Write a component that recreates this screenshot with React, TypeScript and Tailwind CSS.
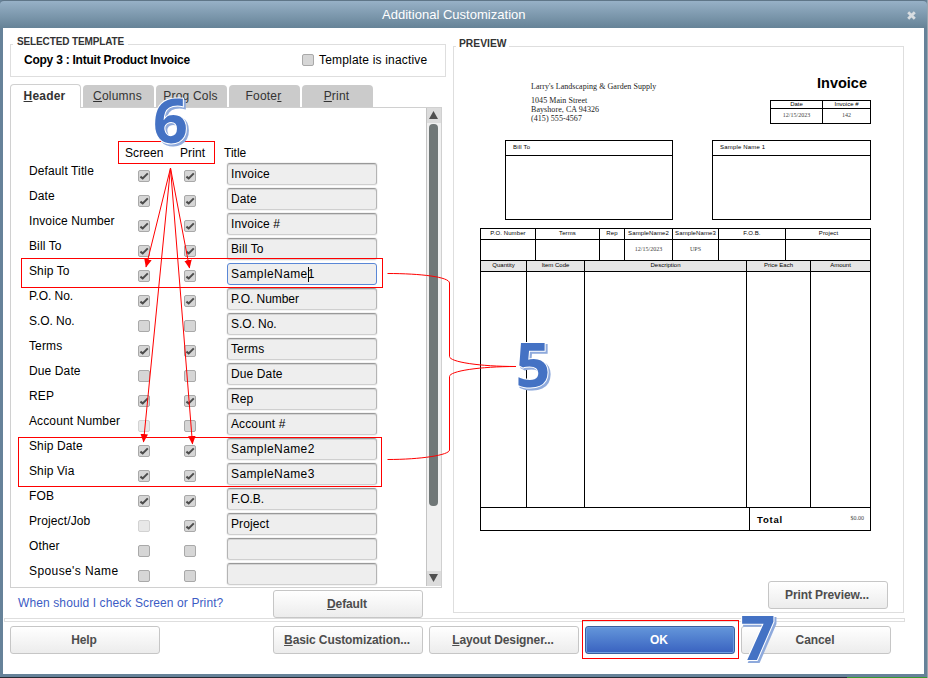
import type { ReactNode } from 'react'
import clsx from 'clsx'

type CheckState = 'on' | 'off' | 'disabled'

// ── Header tab fields ────────────────────────────────────────────────────────
const FIELDS: { label: string; screen: CheckState; print: CheckState; title: string; focused?: boolean }[] = [
  { label: 'Default Title', screen: 'on', print: 'on', title: 'Invoice' },
  { label: 'Date', screen: 'on', print: 'on', title: 'Date' },
  { label: 'Invoice Number', screen: 'on', print: 'on', title: 'Invoice #' },
  { label: 'Bill To', screen: 'on', print: 'on', title: 'Bill To' },
  { label: 'Ship To', screen: 'on', print: 'on', title: 'SampleName1', focused: true },
  { label: 'P.O. No.', screen: 'on', print: 'on', title: 'P.O. Number' },
  { label: 'S.O. No.', screen: 'off', print: 'off', title: 'S.O. No.' },
  { label: 'Terms', screen: 'on', print: 'on', title: 'Terms' },
  { label: 'Due Date', screen: 'off', print: 'off', title: 'Due Date' },
  { label: 'REP', screen: 'on', print: 'on', title: 'Rep' },
  { label: 'Account Number', screen: 'disabled', print: 'off', title: 'Account #' },
  { label: 'Ship Date', screen: 'on', print: 'on', title: 'SampleName2' },
  { label: 'Ship Via', screen: 'on', print: 'on', title: 'SampleName3' },
  { label: 'FOB', screen: 'on', print: 'on', title: 'F.O.B.' },
  { label: 'Project/Job', screen: 'disabled', print: 'on', title: 'Project' },
  { label: 'Other', screen: 'off', print: 'off', title: '' },
  { label: "Spouse's Name", screen: 'off', print: 'off', title: '' },
]

const INFO_COLS = [
  { head: 'P.O. Number', value: '' },
  { head: 'Terms', value: '' },
  { head: 'Rep', value: '' },
  { head: 'SampleName2', value: '12/15/2023' },
  { head: 'SampleName3', value: 'UPS' },
  { head: 'F.O.B.', value: '' },
  { head: 'Project', value: '' },
]

const ITEM_COLS = ['Quantity', 'Item Code', 'Description', 'Price Each', 'Amount']

// Names run a little wide, dotted abbreviations a little tight
function tracking(text: string) {
  if (/Name/.test(text)) return 'tracking-[0.4px]'
  if (/^\w\.O\./.test(text)) return 'tracking-[-0.05px]'
  return 'tracking-[0.12px]'
}

function Checkbox({ state }: { state: CheckState }) {
  return (
    <span
      className={clsx(
        'block size-3 shrink-0 rounded-[2px] border',
        state === 'disabled' ? 'border-[#d2d2d2] bg-[#e8e8e8]' : 'border-[#a9a9a9] bg-[#d6d6d6]',
      )}
    >
      {state === 'on' && (
        <svg viewBox="0 0 10 10" className="block size-[10px]">
          <path d="M1.4 5.6 L3.7 7.4 L8.8 2.4" fill="none" stroke="#4c4c4c" strokeWidth="2" />
        </svg>
      )}
    </span>
  )
}

function Button({ className, primary, children }: { className?: string; primary?: boolean; children: ReactNode }) {
  return (
    <button
      className={clsx(
        'h-7 shrink-0 rounded-[3px] border pr-0.5 text-center text-[12px] leading-[26px] font-bold tracking-[-0.1px]',
        primary
          ? 'border-[#3a5f9c] bg-linear-to-b from-[#6496da] to-[#3a62c0] text-white shadow-[inset_0_0_0_1px_#6f9de0]'
          : 'border-[#c6c6c6] bg-linear-to-b from-white to-[#ececec] text-[#4d4d4d]',
        className,
      )}
    >
      {children}
    </button>
  )
}

function Tab({ active, children }: { active?: boolean; children: ReactNode }) {
  return (
    <div
      className={clsx(
        'text-center text-[12px] tracking-[0.2px] text-[#333]',
        active
          ? 'z-10 h-6 w-[71px] rounded-t-[4px] border border-b-0 border-[#d0d0d0] bg-white pr-0.5 leading-[23px] font-bold'
          : 'mt-px h-[22px] w-[71px] rounded-t-[4px] bg-[#cbcbcb] pr-0.5 leading-[22px]',
      )}
    >
      {children}
    </div>
  )
}

function TemplateBox() {
  return (
    <div className="mt-4 h-[33px] w-[436px] border border-[#dedede]">
      <p className="-mt-[9px] ml-[2px] w-[115px] bg-white pl-1 text-[10px] leading-[11px] font-bold tracking-[-0.13px] whitespace-nowrap text-[#333]">
        SELECTED TEMPLATE
      </p>
      <div className="flex items-center pt-[5px] pl-[13px] leading-4">
        <span className="w-[278px] font-bold tracking-[-0.24px]">Copy 3 : Intuit Product Invoice</span>
        <Checkbox state="off" />
        <span className="ml-[5px] tracking-[0.18px]">Template is inactive</span>
      </div>
    </div>
  )
}

function Scrollbar() {
  return (
    <div className="flex h-[478px] w-[15px] flex-col border-l border-[#c4c4c4] bg-[#f0f0f0]">
      <div className="h-[15px] bg-[#dcdcdc] pt-[3px] pl-[2px]">
        <svg viewBox="0 0 9 8" className="h-2 w-[9px]">
          <path d="M4.5 0 L9 8 H0 Z" fill="#4f4f4f" />
        </svg>
      </div>
      <div className="mt-px ml-[2px] h-[382px] w-[9px] rounded-[4px] bg-[#707777]" />
      <div className="mt-auto h-[15px] bg-[#dcdcdc] pt-[3px] pl-[2px]">
        <svg viewBox="0 0 9 8" className="h-2 w-[9px]">
          <path d="M4.5 8 L9 0 H0 Z" fill="#4f4f4f" />
        </svg>
      </div>
    </div>
  )
}

function FieldsPanel() {
  return (
    <div className="-mt-px flex h-[481px] w-[432px] overflow-hidden border border-[#d0d0d0]">
      <div className="w-[415px]">
        <div className="flex h-[55px] pt-[37px] leading-4">
          <span className="ml-[114px] w-[55px] tracking-[0.1px]">Screen</span>
          <span className="w-[44px] tracking-[0.1px]">Print</span>
          <span>Title</span>
        </div>
        {FIELDS.map((f) => (
          <div key={f.label} className="flex h-[25px] items-start">
            <span className={clsx('ml-[18px] w-[109px] leading-4 whitespace-nowrap', tracking(f.label))}>{f.label}</span>
            <span className="mt-[7px] mr-[34px]">
              <Checkbox state={f.screen} />
            </span>
            <span className="mt-[7px] mr-[31px]">
              <Checkbox state={f.print} />
            </span>
            <div
              className={clsx(
                'h-[22px] w-[150px] rounded-[3px] border bg-[#eee] pl-[3px] leading-5',
                tracking(f.title),
                f.focused
                  ? 'border-[#5a87d6]'
                  : 'border-x-[#b4b4b4] border-t-[#999] border-b-[#cfcfcf] shadow-[inset_0_1px_0_#d4d4d4,0_0_0_1px_#f4f4f4]',
              )}
            >
              {f.focused ? (
                <>
                  {f.title.slice(0, -1)}
                  <span className="-mr-px inline-block h-[15px] w-px bg-black align-middle" />
                  {f.title.slice(-1)}
                </>
              ) : (
                f.title
              )}
            </div>
          </div>
        ))}
      </div>
      <Scrollbar />
    </div>
  )
}

function AddressBox({ title, className }: { title: string; className: string }) {
  return (
    <div className={clsx('h-20 border border-black', className)}>
      <div className="h-[15px] border-b border-black pl-[7px] text-[6px] leading-[13px] tracking-[0.18px]">{title}</div>
    </div>
  )
}

function InvoicePaper() {
  return (
    <div className="ml-[26px] w-[391px] text-black">
      {/* Company + invoice number */}
      <div className="flex h-[93px] justify-between pt-[27px]">
        <div className="ml-[51px] pt-[8px] font-['Liberation_Serif'] text-[8px] leading-[9px] whitespace-nowrap text-[#222]">
          <p className="mb-[5px] tracking-[0.05px]">Larry's Landscaping &amp; Garden Supply</p>
          <p className="tracking-[0.05px]">1045 Main Street</p>
          <p className="tracking-[0.07px]">Bayshore, CA 94326</p>
          <p className="tracking-[0.07px]">(415) 555-4567</p>
        </div>
        <div className="w-[101px]">
          <p className="pr-1 text-right text-[14.5px] leading-[18px] font-bold">Invoice</p>
          <div className="mt-2 grid h-6 grid-cols-[52px_47px] grid-rows-[8px_14px] border border-black text-center text-[6px]">
            <div className="border-r border-b border-black leading-[7px]">Date</div>
            <div className="border-b border-black leading-[7px]">Invoice #</div>
            <div className="border-r border-black font-['Liberation_Serif'] leading-[13px] text-[#444]">12/15/2023</div>
            <div className="font-['Liberation_Serif'] leading-[13px] text-[#444]">142</div>
          </div>
        </div>
      </div>

      {/* Addresses */}
      <div className="flex justify-between pl-[25px]">
        <AddressBox title="Bill To" className="w-[168px]" />
        <AddressBox title="Sample Name 1" className="w-[159px]" />
      </div>

      {/* Order info */}
      <div className="mt-2 grid h-8 grid-cols-[55px_64px_25px_48px_46px_67px_85px] border border-b-0 border-black text-center text-[6px]">
        {INFO_COLS.map((c, i) => (
          <div key={c.head} className={clsx('overflow-hidden whitespace-nowrap', i < 6 && 'border-r border-black')}>
            <div className="h-[11px] border-b border-black leading-[9px] tracking-[0.1px]">{c.head}</div>
            <div className="pt-[3px] font-['Liberation_Serif'] leading-[13px] text-[#444]">{c.value}</div>
          </div>
        ))}
      </div>

      {/* Line items */}
      <div className="grid h-[247px] grid-cols-[46px_58px_162px_64px_59px] border border-b-0 border-black text-center text-[6px]">
        {ITEM_COLS.map((c, i) => (
          <div key={c} className={clsx(i < 4 && 'border-r border-black')}>
            <div className="h-[11px] border-b border-black bg-[#e6e6e6] leading-[9px]">{c}</div>
          </div>
        ))}
      </div>
      <div className="flex h-6 border border-black">
        <div className="w-[269px] border-r border-black" />
        <span className="ml-[7px] text-[9.5px] leading-[23px] font-bold tracking-[0.8px]">Total</span>
        <span className="mr-[6px] ml-auto font-['Liberation_Serif'] text-[6px] leading-5 text-[#444]">$0.00</span>
      </div>
    </div>
  )
}

function StepNumber({ n, x, y }: { n: string; x: number; y: number }) {
  return (
    <text
      x={x}
      y={y}
      className="font-['Open_Sans',sans-serif] text-[61px] font-bold [filter:drop-shadow(2px_2px_0_#8faadc)]"
      fill="#4472c4"
      stroke="#fff"
      strokeWidth="2"
      paintOrder="stroke"
    >
      {n}
    </text>
  )
}

// Red callouts and step numbers drawn over the dialog
function Annotations() {
  return (
    <svg className="pointer-events-none absolute inset-0 z-20" width="928" height="678" viewBox="0 0 928 678">
      <defs>
        <marker id="head" markerWidth="9" markerHeight="8" refX="8" refY="4" orient="auto" markerUnits="userSpaceOnUse">
          <path d="M0 0.2 L8.5 4 L0 7.8 Z" fill="#f00" />
        </marker>
      </defs>
      <g fill="none" stroke="#f00" strokeWidth="1">
        <rect x="118.5" y="141.5" width="96" height="22" />
        <rect x="21.5" y="258.5" width="361" height="29" />
        <rect x="18.5" y="437.5" width="363" height="49" />
        <rect x="582.5" y="620.5" width="156" height="38" />
        <path d="M170.5 168 L146 267" markerEnd="url(#head)" />
        <path d="M170.5 168 L189.5 268" markerEnd="url(#head)" />
        <path d="M170.5 168 L143.5 442" markerEnd="url(#head)" />
        <path d="M170.5 168 L192.5 444" markerEnd="url(#head)" />
        <path d="M387.5 273.5 C421 273.5 449.5 277 449.5 283 V356.5 C449.5 362 480 366.5 516 366.5 C480 366.5 449.5 371 449.5 376.5 V450 C449.5 455 421 459.5 387.5 459.5" />
      </g>
      <StepNumber n="6" x={153} y={143} />
      <StepNumber n="5" x={515.5} y={387} />
      <StepNumber n="7" x={740.5} y={660} />
    </svg>
  )
}

export default function App() {
  return (
    <div className="relative flex h-[678px] w-[928px] flex-col overflow-hidden border-r border-[#9aa6af] bg-[#668299] font-['Liberation_Sans',Arial,sans-serif] text-[12px] text-black">
      {/* Title bar */}
      <header className="flex h-7 shrink-0 items-center rounded-t-[4px] border-t border-[#5f7688] bg-linear-to-b from-[#97b1c7] to-[#668397] text-white">
        <h1 className="ml-[382px] pt-px text-[13px] leading-4 tracking-[0.02px]">Additional Customization</h1>
        <svg viewBox="0 0 9 9" className="mt-px mr-[11px] ml-auto size-[9px]">
          <path d="M1.2 1.2 L7.8 7.8 M7.8 1.2 L1.2 7.8" stroke="#d8dde1" strokeWidth="2.8" />
        </svg>
      </header>

      <div className="mr-[3px] ml-[3px] flex h-[646px] shrink-0 flex-col bg-white">
        <main className="flex h-[590px] pl-[7px]">
          <section className="w-[443px]">
            <TemplateBox />
            <div className="mt-[7px] flex gap-[2px]">
              <Tab active>
                <u>H</u>eader
              </Tab>
              <Tab>
                <u>C</u>olumns
              </Tab>
              <Tab>Prog Cols</Tab>
              <Tab>
                Foote<u>r</u>
              </Tab>
              <Tab>
                <u>P</u>rint
              </Tab>
            </div>
            <FieldsPanel />
            <div className="flex pt-[2px] pl-2">
              <a className="w-[255px] leading-[26px] tracking-[0.11px] text-[#3c5cc4]">When should I check Screen or Print?</a>
              <Button className="w-[150px]">
                <u>D</u>efault
              </Button>
            </div>
          </section>

          <section className="mt-[18px] flex h-[567px] w-[451px] flex-col border border-[#dedede]">
            <p className="-mt-[9px] ml-[2px] w-[53px] bg-white pl-[3px] text-[10.3px] leading-[11px] font-bold text-[#333]">PREVIEW</p>
            <div className="-mt-[2px]">
              <InvoicePaper />
            </div>
            <Button className="mt-auto mr-[15px] mb-[3px] w-[120px] self-end">Print Preview...</Button>
          </section>
        </main>

        <div className="ml-px h-1 w-[901px] shrink-0 border border-[#dedede]" />

        {/* Dialog buttons */}
        <footer className="mt-1 flex gap-[6px] pl-[7px]">
          <Button className="mr-[107px] w-[150px]">Help</Button>
          <Button className="w-[150px]">
            <u>B</u>asic Customization...
          </Button>
          <Button className="w-[150px]">
            <u>L</u>ayout Designer...
          </Button>
          <Button primary className="w-[150px]">
            OK
          </Button>
          <Button className="w-[150px]">Cancel</Button>
        </footer>
      </div>

      {/* Desktop showing below the window */}
      <div className="mt-[3px] flex h-px shrink-0 bg-[#262a33]">
        <span className="ml-[847px] h-px w-[80px] bg-[#3a9a2c]" />
      </div>
      <Annotations />
    </div>
  )
}
